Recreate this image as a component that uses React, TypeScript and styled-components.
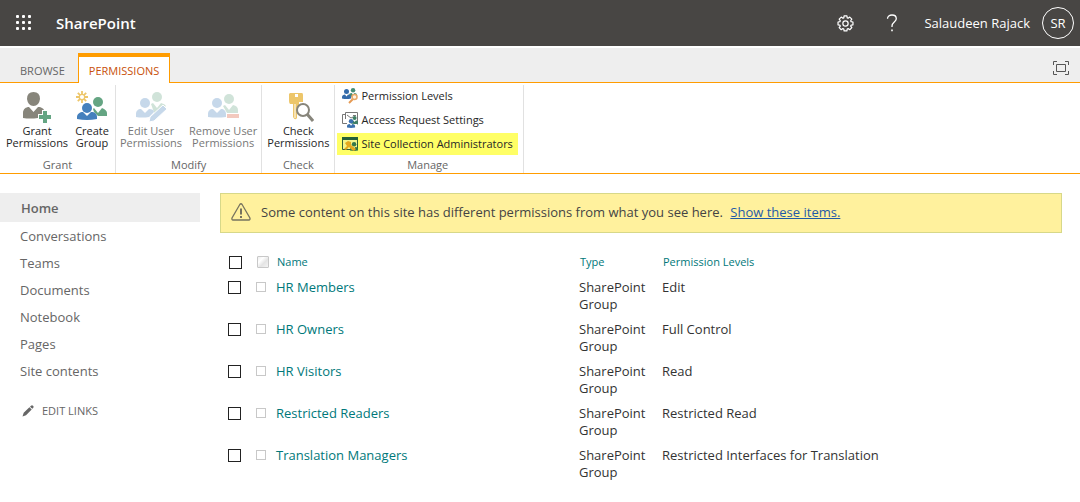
import React from "react";
import styled, { createGlobalStyle } from "styled-components";

const GlobalStyle = createGlobalStyle`
  * { box-sizing: border-box; }
  body {
    margin: 0;
    background: #fff;
    color: #444;
    font-family: "Open Sans", "Noto Sans", sans-serif;
    font-size: 13px;
    line-height: 17px;
  }
  button { font-family: inherit; border: 0; background: none; padding: 0; cursor: pointer; }
  a { text-decoration: none; color: inherit; }
  svg { display: block; flex: none; }
`;

const SuiteBar = styled.header`
  display: flex;
  align-items: center;
  height: 46px;
  padding: 0 6px 0 16px;
  background: #484644;
  color: #fff;
`;
const Brand = styled.a`
  margin-left: 24px;
  font-size: 15px;
  font-weight: 600;
`;
const SuiteButton = styled.button`
  display: flex;
  align-items: center;
  justify-content: center;
  width: 16px;
  height: 32px;
  color: #fff;
`;
const SuiteActions = styled.div`
  display: flex;
  align-items: center;
  gap: 31px;
  margin: 0 24px 0 auto;
`;
const Account = styled.button`
  display: flex;
  align-items: center;
  gap: 12px;
  color: #fff;
  font-size: 13px;
`;
const Avatar = styled.span`
  display: flex;
  align-items: center;
  justify-content: center;
  width: 32px;
  height: 32px;
  border: 1px solid #fff;
  border-radius: 50%;
`;

const TabBar = styled.nav`
  display: flex;
  align-items: flex-end;
  gap: 2px;
  height: 37px;
  border-top: 2px solid #fff;
  border-bottom: 1px solid #ff9c00;
  background: #eee;
  padding-left: 9px;
`;
const Tab = styled.button<{ $active?: boolean }>`
  height: 30px;
  margin-bottom: -1px;
  padding: 0 10px;
  border: 1px solid ${(p) => (p.$active ? "#ff9c00" : "transparent")};
  border-top-width: 4px;
  border-bottom: 0;
  background: ${(p) => (p.$active ? "#fff" : "transparent")};
  color: ${(p) => (p.$active ? "#c8500a" : "#666")};
  font-size: 11px;
  line-height: 17px;
`;
const FocusButton = styled.button`
  margin: 0 11px 7px auto;
  color: #555;
`;

const Ribbon = styled.section`
  display: flex;
  height: 91px;
  padding: 2px 0 0;
  border-bottom: 1px solid #ff9c00;
`;
const Group = styled.div<{ $side?: number }>`
  display: flex;
  flex-direction: column;
  justify-content: space-between;
  padding: 6px ${(p) => p.$side ?? 5}px 0;
  border-right: 1px solid #e1e1e1;
`;
const GroupItems = styled.div`
  display: flex;
  gap: 7px;
`;
const GroupLabel = styled.div`
  padding-bottom: 1px;
  text-align: center;
  color: #666;
  font-size: 11px;
  line-height: 14px;
`;
const BigButton = styled.button<{ $muted?: boolean }>`
  display: flex;
  flex-direction: column;
  align-items: center;
  gap: 2px;
  color: ${(p) => (p.$muted ? "#777" : "#262626")};
  font-size: 11px;
  line-height: 12px;
  svg { opacity: ${(p) => (p.$muted ? 0.3 : 1)}; }
`;
const ManageGroup = styled(Group)`
  padding: 0 5px 0 2px;
`;
const SmallList = styled.div`
  display: flex;
  flex-direction: column;
  gap: 2px;
`;
const SmallButton = styled.button<{ $marked?: boolean }>`
  display: flex;
  align-items: center;
  gap: 3px;
  height: 22px;
  padding: 0 5px;
  background: ${(p) => (p.$marked ? "#ffff66" : "transparent")};
  color: #262626;
  font-size: 11px;
  line-height: 14px;
`;

const Page = styled.div`
  display: flex;
  gap: 20px;
  padding: 19px 18px 0 0;
`;
const SideNav = styled.nav`
  flex: none;
  width: 200px;
  color: #666;
`;
const NavLink = styled.a<{ $current?: boolean }>`
  display: block;
  padding: ${(p) => (p.$current ? "7px 21px 5px" : "6px 20px 4px")};
  background: ${(p) => (p.$current ? "#eee" : "transparent")};
  font-weight: ${(p) => (p.$current ? 600 : 400)};
`;
const EditLinks = styled.button`
  display: flex;
  align-items: center;
  gap: 8px;
  margin-top: 18px;
  padding-left: 22px;
  color: #666;
  font-size: 11px;
  line-height: 17px;
`;
const Main = styled.main`
  flex: 1;
  min-width: 0;
`;
const Notice = styled.div`
  display: flex;
  align-items: center;
  gap: 10px;
  height: 40px;
  padding: 0 10px 2px;
  border: 1px solid #d7d889;
  background: #fff19d;
`;
const NoticeLink = styled.a`
  margin-left: 4px;
  color: #1f5aa8;
  text-decoration: underline;
`;
const Table = styled.table`
  width: 100%;
  margin-top: 16px;
  border-collapse: collapse;
  table-layout: fixed;
`;
const Col = styled.col<{ $width?: number }>`
  width: ${(p) => (p.$width ? `${p.$width}px` : "auto")};
`;
const HeadCell = styled.th`
  height: 25px;
  padding: 0 0 0 1px;
  color: #00787a;
  font-size: 11px;
  font-weight: 400;
  text-align: left;
  vertical-align: middle;
`;
const Cell = styled.td`
  padding: 5px 15px 3px 0;
  color: #333;
  vertical-align: top;
`;
const GroupLink = styled.a`
  color: #00787a;
`;
const Check = styled.input`
  appearance: none;
  display: block;
  width: 13px;
  height: 13px;
  margin: 2px 0 0 8px;
  border: 1px solid #222;
  background: #fff;
`;
const Presence = styled.span`
  display: block;
  width: 10px;
  height: 10px;
  margin: 3px 0 0 1px;
  border: 1px solid #c8c8c8;
`;
const PresenceHead = styled.span`
  display: block;
  width: 12px;
  height: 12px;
  margin-left: 1px;
  border: 1px solid #c8c8c8;
  border-radius: 1px;
  background: linear-gradient(135deg, #eee, #fff 30%, #e4e4e4 60%, #f4f4f4);
`;

const GREY = "#87857b";
const BLUE = "#4580bd";
const GREEN = "#65a583";
const GOLD = "#edc66a";

const Person = ({ x, y, s = 1, fill }: { x: number; y: number; s?: number; fill: string }) => (
  <g transform={`translate(${x} ${y}) scale(${s})`} fill={fill}>
    <circle cx="9" cy="5" r="5" />
    <path d="M0 19v-3c0-3 3-5 6-5l3 4 3-4c3 0 6 2 6 5v3q-9 2-18 0z" />
  </g>
);
const Waffle = () => (
  <svg width="16" height="16" fill="#fff">
    {[0, 6, 12].map((y) => [0, 6, 12].map((x) => <rect key={`${x}-${y}`} x={x} y={y} width="3" height="3" rx="1" />))}
  </svg>
);
const Gear = () => (
  <svg width="17" height="17" viewBox="0 0 18 18" fill="none" stroke="#fff" strokeWidth="1.300" strokeLinejoin="round">
    <path d="M7.500 1h3l.3 2 1 .4 1.700-1.200 2.200 2.200-1.200 1.700.4 1 2 .3v3l-2 .3-.4 1 1.200 1.700-2.200 2.200-1.700-1.200-1 .4-.3 2h-3l-.3-2-1-.4-1.700 1.200-2.200-2.200 1.200-1.700-.4-1-2-.3v-3l2-.3.4-1-1.200-1.700 2.200-2.200 1.700 1.200 1-.4z" />
    <circle cx="9" cy="9" r="2.800" />
  </svg>
);
const Help = () => (
  <svg width="12" height="18" viewBox="0 0 12 18" fill="none" stroke="#fff" strokeWidth="1.300">
    <path d="M1.500 4.800C1.500 2.400 3.500 1 6 1s4.300 1.500 4.300 3.800C10.300 8 6 8.200 6 12v1" />
    <path d="M6 15.500v1.700" strokeWidth="1.600" />
  </svg>
);
const FocusIcon = () => (
  <svg width="16" height="14" viewBox="0 0 16 14" fill="none" stroke="currentColor">
    <path d="M.5 4V.5H4M12 .5h3.500V4M15.500 10v3.500H12M4 13.500H.5V10M3.500 3.500h9v7h-9z" />
  </svg>
);
const GrantIcon = () => (
  <svg width="32" height="32" viewBox="0 0 32 32">
    <path d="M6 8q0-7 6.500-7T19 8q-1 7-6.500 7T6 8z" fill={GREY} />
    <path d="M2 27v-5c0-4 3-6 6-6l4.500 5 4.500-5c4 0 5.500 2 6 3h-2v4h-4v4q-8 1-15 0z" fill={GREY} />
    <path d="M22 20h4v4h4v4h-4v4h-4v-4h-4v-4h4z" fill={GREEN} />
  </svg>
);
const CreateIcon = () => (
  <svg width="32" height="32" viewBox="0 0 32 32">
    <circle cx="22" cy="11" r="5" fill={GREEN} />
    <path d="M17 18l1-1 4 5 4-5c3 1 5 3 5 5v3h-9l-4-4z" fill={GREEN} />
    <circle cx="11" cy="17" r="5" fill={BLUE} />
    <path d="M1 28v-2c0-3 3-5 6-5l4 4 4-4c4 0 6 2 6 5v2q-10 2-20 0z" fill={BLUE} />
    <path d="M6 0v12M0 6h12M1.800 1.800l8.400 8.400M10.200 1.800l-8.400 8.400" stroke={GOLD} strokeWidth="1.800" />
    <circle cx="6" cy="6" r="2.700" fill="#fff" stroke={GOLD} strokeWidth="1.300" />
  </svg>
);
const EditIcon = () => (
  <svg width="32" height="32" viewBox="0 0 32 32">
    <circle cx="22" cy="6" r="5" fill={GREEN} />
    <path d="M16 13l2-1 4 5 4-5q4 1 5 3L20 24z" fill={GREEN} />
    <circle cx="10" cy="12" r="5" fill={BLUE} />
    <path d="M1 26v-3c0-3 2-5 5-5l4 4 4-4c3 0 5 1 5 3l-5 5q-7 1-13 0z" fill={BLUE} />
    <path d="M14 31l1-5 13-12 4 4-13 12z" fill={BLUE} stroke="#fff" />
  </svg>
);
const RemoveIcon = () => (
  <svg width="32" height="32" viewBox="0 0 32 32">
    <circle cx="22" cy="8" r="5" fill={GREEN} />
    <path d="M16 15l2-1 4 5 4-5q5 1 5 5v3H20z" fill={GREEN} />
    <circle cx="10" cy="12" r="5" fill={BLUE} />
    <path d="M1 26v-3c0-3 2-5 5-5l4 4 4-4c3 0 5 2 5 5v3q-9 1-18 0z" fill={BLUE} />
    <path d="M20 23h12v4H20z" fill="#d9502c" />
  </svg>
);
const CheckIcon = () => (
  <svg width="32" height="32" viewBox="0 0 32 32">
    <path fillRule="evenodd" d="M8 2h12q1 0 1 2v7h-4v3l-2 5v8q-2 3-4-1V13H8q-1-1-1-3V3zm5 1v3h3V3z" fill={GOLD} />
    <path d="M13 13v14" stroke="#fff" />
    <circle cx="21" cy="19" r="6" fill="#fff" stroke={GREY} strokeWidth="2" />
    <path d="M25 23l6 7" stroke={GREY} strokeWidth="3" />
  </svg>
);
const LevelsIcon = () => (
  <svg width="16" height="16" viewBox="0 0 16 16">
    <Person x={7} y={0} s={0.45} fill="#458c74" />
    <Person x={0} y={1} s={0.5} fill="#356cab" />
    <path d="M7 15l4-4" stroke="#e59a54" strokeWidth="2" />
    <circle cx="12.500" cy="9" r="2.500" fill="#fff3df" stroke="#e8a766" strokeWidth="1.500" />
  </svg>
);
const RequestIcon = () => (
  <svg width="16" height="16" viewBox="0 0 16 16">
    <path d="M5 11.500H.5v-9h3M3.500 7V.5h12v12M5 3l4 3 2-1M11 3.500h3" fill="none" stroke="#777" />
    <Person x={9} y={4} s={0.4} fill="#3f8065" />
    <Person x={5} y={7} s={0.45} fill="#3a70ae" />
  </svg>
);
const AdminIcon = () => (
  <svg width="16" height="16" viewBox="0 0 16 16">
    <path d="M.5 1.500h15v12H.5z" fill="#f3f58a" stroke="#315f3a" />
    <path d="M0 1h16v3H0z" fill="#245f38" />
    <Person x={8} y={6} s={0.45} fill="#347848" />
    <path d="M3 7l3-2 3 1v3l5 4-2 2-2-1-3-3-3 3-2-1 3-3z" fill="#e5a91e" />
  </svg>
);
const Warning = () => (
  <svg width="20" height="18" viewBox="0 0 20 18" fill="none" stroke="#77745f" strokeWidth="1.300">
    <path d="M8.800 1.500q1.200-1.500 2.300 0l7.800 13.500q.5 2-1 2H2q-1.500 0-1-2z" />
    <path d="M10 5.500v6M10 13v2" strokeWidth="2" />
  </svg>
);
const Pencil = () => (
  <svg width="12" height="12" viewBox="0 0 12 12" fill="#666">
    <path d="M.5 11.500l1.200-3.700 5.700-5.500 2.300 2.300L4 10.200zM8 1.700l1-1q1-.8 2 0t.3 2l-1 1z" />
  </svg>
);

const navItems = ["Conversations", "Teams", "Documents", "Notebook", "Pages", "Site contents"];
const groups = [
  ["HR Members", "Edit"],
  ["HR Owners", "Full Control"],
  ["HR Visitors", "Read"],
  ["Restricted Readers", "Restricted Read"],
  ["Translation Managers", "Restricted Interfaces for Translation"],
];

export default function App() {
  return (
    <>
      <GlobalStyle />
      <SuiteBar>
        <SuiteButton aria-label="App launcher"><Waffle /></SuiteButton>
        <Brand href="#">SharePoint</Brand>
        <SuiteActions>
          <SuiteButton aria-label="Settings"><Gear /></SuiteButton>
          <SuiteButton aria-label="Help"><Help /></SuiteButton>
        </SuiteActions>
        <Account>Salaudeen Rajack<Avatar>SR</Avatar></Account>
      </SuiteBar>
      <TabBar>
        <Tab>BROWSE</Tab>
        <Tab $active>PERMISSIONS</Tab>
        <FocusButton aria-label="Focus on content"><FocusIcon /></FocusButton>
      </TabBar>
      <Ribbon>
        <Group $side={6}>
          <GroupItems>
            <BigButton><GrantIcon /><span>Grant<br />Permissions</span></BigButton>
            <BigButton><CreateIcon /><span>Create<br />Group</span></BigButton>
          </GroupItems>
          <GroupLabel>Grant</GroupLabel>
        </Group>
        <Group $side={4}>
          <GroupItems>
            <BigButton $muted><EditIcon /><span>Edit User<br />Permissions</span></BigButton>
            <BigButton $muted><RemoveIcon /><span>Remove User<br />Permissions</span></BigButton>
          </GroupItems>
          <GroupLabel>Modify</GroupLabel>
        </Group>
        <Group>
          <GroupItems>
            <BigButton><CheckIcon /><span>Check<br />Permissions</span></BigButton>
          </GroupItems>
          <GroupLabel>Check</GroupLabel>
        </Group>
        <ManageGroup>
          <SmallList>
            <SmallButton><LevelsIcon />Permission Levels</SmallButton>
            <SmallButton><RequestIcon />Access Request Settings</SmallButton>
            <SmallButton $marked><AdminIcon />Site Collection Administrators</SmallButton>
          </SmallList>
          <GroupLabel>Manage</GroupLabel>
        </ManageGroup>
      </Ribbon>
      <Page>
        <SideNav>
          <NavLink href="#" $current>Home</NavLink>
          {navItems.map((item) => <NavLink href="#" key={item}>{item}</NavLink>)}
          <EditLinks><Pencil />EDIT LINKS</EditLinks>
        </SideNav>
        <Main>
          <Notice>
            <Warning />
            <span>
              Some content on this site has different permissions from what you see here.{" "}
              <NoticeLink href="#">Show these items.</NoticeLink>
            </span>
          </Notice>
          <Table>
            <colgroup>
              <Col $width={35} /><Col $width={21} /><Col $width={303} /><Col $width={83} /><Col />
            </colgroup>
            <thead>
              <tr>
                <HeadCell><Check type="checkbox" aria-label="Select all" /></HeadCell>
                <HeadCell><PresenceHead /></HeadCell>
                <HeadCell>Name</HeadCell>
                <HeadCell>Type</HeadCell>
                <HeadCell>Permission Levels</HeadCell>
              </tr>
            </thead>
            <tbody>
              {groups.map(([name, level]) => (
                <tr key={name}>
                  <Cell><Check type="checkbox" aria-label={name} /></Cell>
                  <Cell><Presence /></Cell>
                  <Cell><GroupLink href="#">{name}</GroupLink></Cell>
                  <Cell>SharePoint Group</Cell>
                  <Cell>{level}</Cell>
                </tr>
              ))}
            </tbody>
          </Table>
        </Main>
      </Page>
    </>
  );
}
